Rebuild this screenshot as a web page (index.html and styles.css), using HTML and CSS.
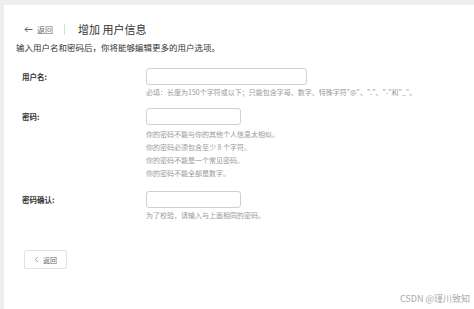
FILE: index.html
```html
<!DOCTYPE html>
<html lang="zh-CN">
<head>
  <meta charset="UTF-8" />
  <title>增加 用户信息</title>
  <link rel="stylesheet" href="styles.css">
</head>
<body>
  <div class="page">
    <div class="page-header">
      <a class="back-link" href="#">
        <svg width="9" height="7" viewBox="0 0 9 7"><path d="M8.5 3.5H1M3.5 1L1 3.5L3.5 6" fill="none" stroke="#555" stroke-width="0.9"/></svg>
        <span>返回</span>
      </a>
      <span class="divider"></span>
      <h1>增加 用户信息</h1>
    </div>
    <p class="intro">输入用户名和密码后，你将能够编辑更多的用户选项。</p>

    <form class="user-form">
      <div class="form-row">
        <label for="username">用户名:</label>
        <div class="field">
          <input type="text" id="username" class="input-wide" />
          <div class="help">必填：长度为150个字符或以下；只能包含字母、数字、特殊字符"@"、"."、"-"和"_"。</div>
        </div>
      </div>

      <div class="form-row">
        <label for="password1">密码:</label>
        <div class="field">
          <input type="password" id="password1" />
          <ul class="help help-list">
            <li>你的密码不能与你的其他个人信息太相似。</li>
            <li>你的密码必须包含至少 8 个字符。</li>
            <li>你的密码不能是一个常见密码。</li>
            <li>你的密码不能全部是数字。</li>
          </ul>
        </div>
      </div>

      <div class="form-row">
        <label for="password2">密码确认:</label>
        <div class="field">
          <input type="password" id="password2" />
          <div class="help">为了校验，请输入与上面相同的密码。</div>
        </div>
      </div>

      <button type="button" class="btn-back">
        <svg width="5" height="7" viewBox="0 0 5 7"><path d="M4 0.8L1.2 3.5L4 6.2" fill="none" stroke="#888" stroke-width="0.8"/></svg>
        <span>返回</span>
      </button>
    </form>

    <div class="watermark">CSDN @瑾川致知</div>
  </div>
</body>
</html>
```

FILE: styles.css
```css
body {
  margin: 0;
  background: #eeeeee;
  font-family: "Noto Sans CJK SC", "Noto Sans", sans-serif;
  color: #333;
}

.page {
  margin: 5px 0 0 4px;
  height: 304px;
  background: #fff;
  position: relative;
}

.page-header {
  display: flex;
  align-items: center;
  padding: 17px 0 0 20px;
  height: 14px;
}

.back-link {
  display: flex;
  align-items: center;
  gap: 4px;
  color: #666;
  font-size: 8px;
  text-decoration: none;
}

.divider {
  width: 1px;
  height: 11px;
  background: #dcdcdc;
  margin: 0 13px 0 11px;
}

h1 {
  margin: 0;
  font-size: 11px;
  font-weight: normal;
  color: #333;
}

.intro {
  margin: 5px 0 0 12px;
  font-size: 8.5px;
  line-height: 12px;
  color: #333;
}

.user-form {
  padding: 15px 0 0 18px;
}

.form-row {
  display: grid;
  grid-template-columns: 124px 1fr;
  margin-bottom: 9px;
}

.form-row label {
  font-size: 7.5px;
  font-weight: bold;
  line-height: 17px;
  color: #333;
}

input {
  display: block;
  width: 95px;
  height: 17px;
  box-sizing: border-box;
  border: 1px solid #d0d0d0;
  border-radius: 3px;
  margin: 0;
}

.input-wide {
  width: 161px;
}

.help {
  font-size: 7px;
  line-height: 13px;
  color: #999;
  margin-top: 1px;
}

.help-list {
  list-style: none;
  padding: 0;
  margin: 3px 0 2px 0;
}

.btn-back {
  display: flex;
  align-items: center;
  gap: 4px;
  margin: 28px 0 0 2px;
  width: 43px;
  height: 19px;
  padding: 0 0 0 9px;
  background: #fff;
  border: 1px solid #e2e2e2;
  border-radius: 2px;
  font-family: inherit;
  font-size: 7px;
  color: #666;
  cursor: pointer;
}

.watermark {
  position: absolute;
  right: 4px;
  bottom: 4px;
  font-size: 9px;
  color: #aaa;
}
```
